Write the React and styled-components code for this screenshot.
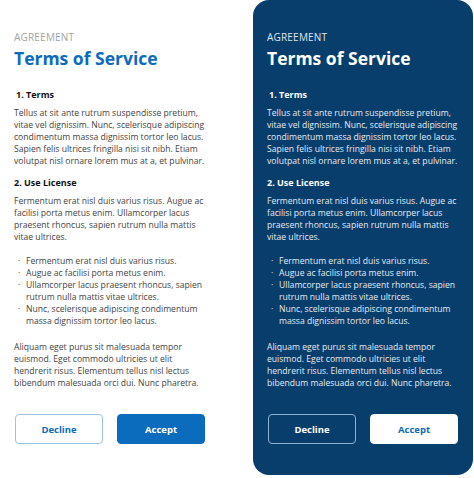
import React from 'react';
import styled, { createGlobalStyle, css } from 'styled-components';

const GlobalStyle = createGlobalStyle`
  html, body {
    margin: 0;
    padding: 0;
    background: #ffffff;
  }
  body {
    font-family: 'Open Sans', 'Liberation Sans', sans-serif;
  }
`;

const terms = [
  {
    title: '1. Terms',
    text: 'Tellus at sit ante rutrum suspendisse pretium, vitae vel dignissim. Nunc, scelerisque adipiscing condimentum massa dignissim tortor leo lacus. Sapien felis ultrices fringilla nisi sit nibh. Etiam volutpat nisl ornare lorem mus at a, et pulvinar.',
  },
  {
    title: '2. Use License',
    text: 'Fermentum erat nisl duis varius risus. Augue ac facilisi porta metus enim. Ullamcorper lacus praesent rhoncus, sapien rutrum nulla mattis vitae ultrices.',
  },
];

const bullets = [
  'Fermentum erat nisl duis varius risus.',
  'Augue ac facilisi porta metus enim.',
  'Ullamcorper lacus praesent rhoncus, sapien rutrum nulla mattis vitae ultrices.',
  'Nunc, scelerisque adipiscing condimentum massa dignissim tortor leo lacus.',
];

const closing =
  'Aliquam eget purus sit malesuada tempor euismod. Eget commodo ultricies ut elit hendrerit risus. Elementum tellus nisl lectus bibendum malesuada orci dui. Nunc pharetra.';

const TermsCard = ({ dark }) => (
  <Card $dark={dark}>
    <Eyebrow $dark={dark}>AGREEMENT</Eyebrow>
    <Title $dark={dark}>Terms of Service</Title>

    {terms.map((t, i) => (
      <Section key={t.title}>
        <SectionTitle $dark={dark} $indent={i === 0}>
          {t.title}
        </SectionTitle>
        <Paragraph $dark={dark}>{t.text}</Paragraph>
      </Section>
    ))}

    <List $dark={dark}>
      {bullets.map((b) => (
        <li key={b}>{b}</li>
      ))}
    </List>

    <Paragraph $dark={dark}>{closing}</Paragraph>

    <Actions>
      <Button $dark={dark}>Decline</Button>
      <Button $dark={dark} $primary>
        Accept
      </Button>
    </Actions>
  </Card>
);

const App = () => (
  <>
    <GlobalStyle />
    <Page>
      <TermsCard />
      <TermsCard dark />
    </Page>
  </>
);

export default App;

const Page = styled.div`
  display: flex;
  gap: 33px;
  width: 474px;
  height: 478px;
  overflow: hidden;
`;

const Card = styled.div`
  flex: 0 0 220px;
  box-sizing: border-box;
  height: 475px;
  padding: 31px 14px 0;
  border-radius: 16px;
  display: flex;
  flex-direction: column;
  background: ${(p) => (p.$dark ? '#083e6c' : '#ffffff')};
  color: ${(p) => (p.$dark ? '#e6ecf2' : '#444444')};
`;

const Eyebrow = styled.div`
  font-size: 10px;
  line-height: 12px;
  letter-spacing: 0.2px;
  color: ${(p) => (p.$dark ? '#dfe6ee' : '#a3a3a3')};
`;

const Title = styled.h1`
  margin: 3px 0 0;
  font-size: 17.5px;
  line-height: 24px;
  font-weight: 700;
  color: ${(p) => (p.$dark ? '#ffffff' : '#0b6bbd')};
`;

const Section = styled.section`
  margin-top: 19px;
  & + & {
    margin-top: 10px;
  }
`;

const SectionTitle = styled.h2`
  margin: 0 0 6px;
  padding-left: ${(p) => (p.$indent ? '2px' : '0')};
  font-size: 9px;
  line-height: 12px;
  font-weight: 700;
  color: ${(p) => (p.$dark ? '#ffffff' : '#111111')};
`;

const textStyle = css`
  font-size: 8.6px;
  line-height: 12px;
`;

const Paragraph = styled.p`
  margin: 0;
  ${textStyle}
`;

const List = styled.ul`
  margin: 12px 0 14px;
  padding: 0 0 0 12px;
  list-style: none;
  ${textStyle}

  li {
    position: relative;
  }

  li::before {
    content: '·';
    position: absolute;
    left: -8px;
    top: 0;
  }
`;

const Actions = styled.div`
  display: flex;
  gap: 14px;
  margin-top: 25px;
  padding: 0 1px;
`;

const Button = styled.button`
  flex: 1;
  height: 30px;
  border-radius: 4px;
  font-family: inherit;
  font-size: 9.5px;
  font-weight: 700;
  cursor: pointer;
  ${(p) =>
    p.$primary
      ? css`
          border: 1px solid ${p.$dark ? '#ffffff' : '#0b6bbd'};
          background: ${p.$dark ? '#ffffff' : '#0b6bbd'};
          color: ${p.$dark ? '#0b6bbd' : '#ffffff'};
        `
      : css`
          border: 1px solid ${p.$dark ? '#8fb2d3' : '#9fc2e2'};
          background: transparent;
          color: ${p.$dark ? '#ffffff' : '#0b6bbd'};
        `}
`;
